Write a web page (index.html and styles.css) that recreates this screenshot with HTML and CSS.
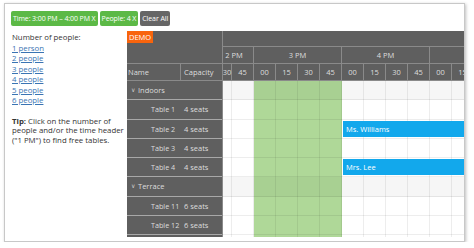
FILE: index.html
```html
<!DOCTYPE html>
<html lang="en">
<head>
  <meta charset="UTF-8" />
  <title>Table Reservations</title>
  <link rel="stylesheet" href="styles.css">
</head>
<body>
  <div class="card">
    <div class="filters">
      <span class="chip chip-green">Time: 3:00 PM – 4:00 PM X</span>
      <span class="chip chip-green">People: 4 X</span>
      <span class="chip chip-grey">Clear All</span>
    </div>

    <div class="main">
      <div class="side">
        <div>Number of people:</div>
        <a href="#">1 person</a>
        <a href="#">2 people</a>
        <a href="#">3 people</a>
        <a href="#">4 people</a>
        <a href="#">5 people</a>
        <a href="#">6 people</a>
        <p class="tip"><b>Tip:</b> Click on the number of people and/or the time header ("1 PM") to find free tables.</p>
      </div>

      <div class="scheduler">
        <!-- row headers -->
        <div class="rows">
          <div class="corner"><span class="demo">DEMO</span></div>
          <div class="colhead">
            <div class="c-name">Name</div>
            <div class="c-cap">Capacity</div>
          </div>
          <div class="rh group"><span class="chev">∨</span>Indoors</div>
          <div class="rh"><div class="c-name">Table 1</div><div class="c-cap">4 seats</div></div>
          <div class="rh"><div class="c-name">Table 2</div><div class="c-cap">4 seats</div></div>
          <div class="rh"><div class="c-name">Table 3</div><div class="c-cap">4 seats</div></div>
          <div class="rh"><div class="c-name">Table 4</div><div class="c-cap">4 seats</div></div>
          <div class="rh group"><span class="chev">∨</span>Terrace</div>
          <div class="rh"><div class="c-name">Table 11</div><div class="c-cap">6 seats</div></div>
          <div class="rh"><div class="c-name">Table 12</div><div class="c-cap">6 seats</div></div>
          <div class="rh"></div>
        </div>

        <!-- timeline -->
        <div class="timeline">
          <div class="t-top"></div>
          <div class="t-hours">
            <div class="hour first">2 PM</div>
            <div class="hour">3 PM</div>
            <div class="hour">4 PM</div>
            <div class="hour">5 PM</div>
          </div>
          <div class="t-mins">
            <div class="min first">30</div><div class="min">45</div>
            <div class="min">00</div><div class="min">15</div><div class="min">30</div><div class="min">45</div>
            <div class="min">00</div><div class="min">15</div><div class="min">30</div><div class="min">45</div>
            <div class="min">00</div><div class="min">15</div><div class="min">30</div><div class="min">45</div>
          </div>
          <div class="t-body">
            <div class="highlight"></div>
            <div class="row group"></div>
            <div class="row"></div>
            <div class="row"><div class="event">Ms. Williams</div></div>
            <div class="row"></div>
            <div class="row"><div class="event">Mrs. Lee</div></div>
            <div class="row group"></div>
            <div class="row"></div>
            <div class="row"></div>
            <div class="row"></div>
          </div>
        </div>
      </div>
    </div>
  </div>
</body>
</html>
```

FILE: styles.css
```css
body {
  margin: 0;
  font-family: "Open Sans", sans-serif;
  font-size: 7.5px;
  background-color: #fff;
  color: #333;
}
.card {
  margin: 3px 0 0 4px;
  width: 461px;
  height: 239px;
  border: 1px solid #c8c8c8;
  box-shadow: 1px 1px 3px rgba(0,0,0,0.25);
  padding: 7px 0 0 6px;
  box-sizing: border-box;
  overflow: hidden;
}
.filters {
  display: flex;
  gap: 2px;
  height: 15px;
}
.chip {
  display: flex;
  align-items: center;
  padding: 0 2px;
  color: #fff;
  font-size: 7px;
  letter-spacing: -0.1px;
  border-radius: 2px;
  white-space: nowrap;
}
.chip-green {
  background-color: #5cb946;
}
.chip-grey {
  background-color: #666;
}
.main {
  display: flex;
  margin-top: 5px;
}
.side {
  width: 116px;
  padding-left: 1px;
  display: flex;
  flex-direction: column;
  font-size: 7.8px;
  line-height: 10.5px;
  margin-top: 1px;
  margin-right: -1px;
}
.side a {
  color: #3a74b3;
}
.tip {
  margin: 11px 0 0;
  line-height: 9.5px;
}

/* scheduler */
.scheduler {
  display: flex;
  width: 337px;
  height: 206px;
  overflow: hidden;
  color: #ddd;
  white-space: nowrap;
}
.rows {
  width: 96px;
  flex: none;
  background-color: #5f5f5f;
  border-right: 1px solid #8a8a8a;
  box-sizing: border-box;
}
.corner {
  height: 33px;
  border-bottom: 1px solid #8a8a8a;
  box-sizing: border-box;
}
.demo {
  display: inline-block;
  background-color: #f8640d;
  color: #fff;
  padding: 1px 2px;
  line-height: 10px;
}
.colhead, .rh {
  display: flex;
  align-items: center;
  height: 17px;
  border-bottom: 1px solid #8a8a8a;
  box-sizing: border-box;
}
.rh {
  height: 19.25px;
  border-bottom-color: #a8a8a8;
}
.colhead .c-name {
  width: 52px;
  height: 100%;
  border-right: 1px solid #8a8a8a;
  padding-left: 1px;
  display: flex;
  align-items: center;
}
.colhead .c-cap {
  padding-left: 3px;
}
.rh .c-name {
  width: 52px;
  flex: none;
  padding-left: 24px;
  box-sizing: border-box;
  font-size: 7.2px;
}
.rh .c-cap {
  padding-left: 5px;
}
.rh.group {
  padding-left: 4px;
}
.chev {
  font-size: 6px;
  margin-right: 3px;
  color: #ccc;
}

.timeline {
  flex: 1;
  overflow: hidden;
}
.t-top {
  height: 16px;
  background-color: #5f5f5f;
  border-bottom: 1px solid #8a8a8a;
  box-sizing: border-box;
}
.t-hours, .t-mins {
  display: flex;
  height: 17px;
  background-color: #5f5f5f;
  border-bottom: 1px solid #8a8a8a;
  box-sizing: border-box;
}
.hour {
  flex: none;
  width: 88px;
  border-right: 1px solid #8a8a8a;
  box-sizing: border-box;
  display: flex;
  align-items: center;
  justify-content: center;
}
.hour.first {
  width: 31px;
  padding-right: 8px;
}
.min {
  flex: none;
  width: 22px;
  border-right: 1px solid #8a8a8a;
  box-sizing: border-box;
  display: flex;
  align-items: center;
  justify-content: center;
}
.min.first {
  width: 9px;
}
.t-body {
  position: relative;
}
.row {
  position: relative;
  z-index: 1;
  height: 19.25px;
  border-bottom: 1px solid rgba(0,0,0,0.07);
  box-sizing: border-box;
  background-image: linear-gradient(to right, rgba(0,0,0,0.07) 1px, transparent 1px);
  background-size: 22px 100%;
  background-position: 8px 0;
}
.row.group {
  background-color: rgba(0,0,0,0.035);
}
.highlight {
  position: absolute;
  left: 31px;
  top: 0;
  width: 88px;
  height: 100%;
  background-color: #afd898;
}
.event {
  position: absolute;
  left: 120px;
  right: 0;
  top: 1px;
  bottom: 1px;
  background-color: #12a8ec;
  color: #fff;
  padding-left: 3px;
  display: flex;
  align-items: center;
}
```
